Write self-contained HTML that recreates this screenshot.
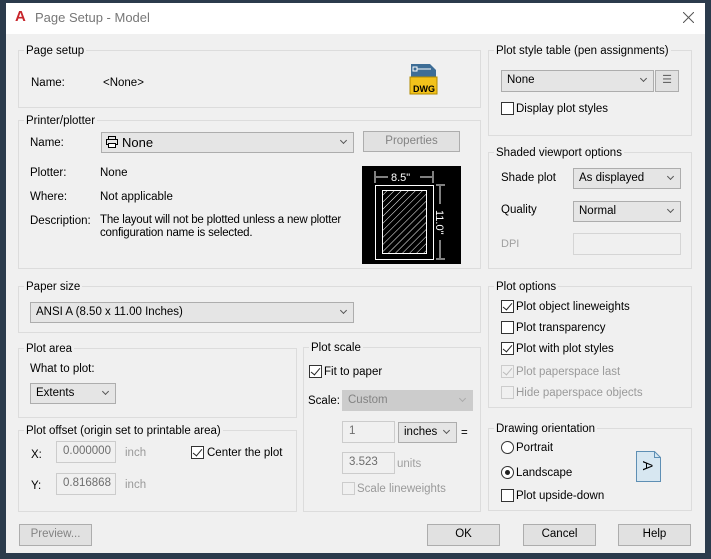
<!DOCTYPE html>
<html><head><meta charset="utf-8"><style>
*{box-sizing:border-box;margin:0;padding:0}
body{width:711px;height:559px;background:#2b3b4c;position:relative;overflow:hidden;font-family:"Liberation Sans",sans-serif;font-size:11.5px;color:#000}
.win{position:absolute;left:6px;top:3px;width:699px;height:550px;background:#f0f0f0}
.title{position:absolute;left:6px;top:3px;width:699px;height:31px;background:#fff}
.a{position:absolute}
.t{position:absolute;white-space:nowrap;line-height:14px}
.g{position:absolute;border:1px solid #dcdcdc}
.gl{position:absolute;background:#f0f0f0;padding:0 2px;line-height:14px;white-space:nowrap}
.sel{position:absolute;border:1px solid #adadad;background:#e5e5e5;padding-left:5px;line-height:18px}
.sel::after{content:"";position:absolute;right:7px;top:5px;width:4px;height:4px;border-right:1px solid #555;border-bottom:1px solid #555;transform:rotate(45deg)}
.dis{background:#ccc;color:#838383;border-color:#ccc}
.dis::after{border-color:#aaa}
.box{position:absolute;border:1px solid #ccc;background:#f0f0f0;color:#6d6d6d;padding-left:6px;line-height:18px}
.btn{position:absolute;border:1px solid #adadad;background:#e1e1e1;text-align:center;line-height:19px}
.cb{position:absolute;width:13px;height:13px;border:1px solid #333;background:#fff}
.cb.on::after{content:"";position:absolute;left:3px;top:0px;width:4px;height:8px;border-right:1.5px solid #222;border-bottom:1.5px solid #222;transform:rotate(40deg)}
.cb.d{border-color:#ccc;background:#f0f0f0}
.cb.d.on::after{border-color:#bbb}
.gray{color:#9a9a9a}
.rb{position:absolute;width:13px;height:13px;border:1px solid #333;border-radius:50%;background:#fff}
</style></head><body>
<div class="win"></div>
<div class="title"></div>
<div class="t" style="left:15px;top:10px;color:#c8262c;font-weight:bold;font-size:15px">A</div>
<div class="t" style="left:35px;top:11px;font-size:13px;color:#777">Page Setup - Model</div>
<svg class="a" style="left:683px;top:12px" width="11" height="11"><path d="M0 0L11 11M11 0L0 11" stroke="#555" stroke-width="1"/></svg>

<!-- Page setup -->
<div class="g" style="left:18px;top:50px;width:463px;height:58px"></div>
<div class="gl" style="left:24px;top:44px">Page setup</div>
<div class="t" style="left:31px;top:76px">Name:</div>
<div class="t" style="left:103px;top:76px">&lt;None&gt;</div>
<svg class="a" style="left:409px;top:63px" width="29" height="33"><path d="M2 1h19l6 6v16H2z" fill="#3d6d96"/><rect x="1" y="14" width="27" height="17" fill="#f2c21b" stroke="#b18a00"/><text x="4" y="29" font-size="9" font-weight="bold" font-family="Liberation Sans">DWG</text><rect x="4" y="4" width="4" height="4" fill="none" stroke="#fff"/><path d="M8 6h14" stroke="#fff"/></svg>

<!-- Printer -->
<div class="g" style="left:18px;top:120px;width:463px;height:149px"></div>
<div class="gl" style="left:24px;top:114px">Printer/plotter</div>
<div class="t" style="left:30px;top:136px">Name:</div>
<div class="sel" style="left:101px;top:132px;width:253px;height:21px;font-size:13px;line-height:19px;padding-left:20px">None</div>
<svg class="a" style="left:106px;top:136px" width="12" height="12"><rect x="2.5" y=".5" width="7" height="3" fill="none" stroke="#000"/><rect x=".5" y="3.5" width="11" height="5" fill="none" stroke="#000"/><rect x="2.5" y="7.5" width="7" height="4" fill="#fff" stroke="#000"/></svg>
<div class="btn dis" style="left:363px;top:131px;width:97px;height:21px">Properties</div>
<div class="t" style="left:30px;top:166px">Plotter:</div><div class="t" style="left:100px;top:166px">None</div>
<div class="t" style="left:30px;top:190px">Where:</div><div class="t" style="left:100px;top:190px">Not applicable</div>
<div class="t" style="left:30px;top:214px">Description:</div>
<div class="t" style="left:100px;top:214px;line-height:13px;letter-spacing:-0.2px">The layout will not be plotted unless a new plotter<br>configuration name is selected.</div>
<svg class="a" style="left:362px;top:166px" width="99" height="98"><rect width="99" height="98" fill="#000"/>
<defs><pattern id="h" width="5" height="5" patternUnits="userSpaceOnUse" patternTransform="rotate(45)"><line x1="0" y1="0" x2="0" y2="5" stroke="#fff" stroke-width="1"/></pattern></defs>
<rect x="13.5" y="19.5" width="58" height="74" fill="none" stroke="#fff"/><rect x="20.5" y="24.5" width="44" height="63" fill="url(#h)" stroke="#fff"/>
<path d="M13 5v12M71 5v12M14 11h12M58 11h12M74 19h9M74 93h9M78 20v18M78 74v18" stroke="#fff"/>
<text x="29" y="15" fill="#fff" font-size="11" font-family="Liberation Sans">8.5"</text>
<text x="0" y="0" fill="#fff" font-size="11" font-family="Liberation Sans" transform="translate(74,44) rotate(90)">11.0"</text></svg>

<!-- Paper size -->
<div class="g" style="left:18px;top:286px;width:463px;height:47px"></div>
<div class="gl" style="left:24px;top:280px">Paper size</div>
<div class="sel" style="left:30px;top:302px;width:324px;height:21px">ANSI A (8.50 x 11.00 Inches)</div>

<!-- Plot area -->
<div class="g" style="left:18px;top:348px;width:279px;height:70px"></div>
<div class="gl" style="left:24px;top:342px">Plot area</div>
<div class="t" style="left:30px;top:362px">What to plot:</div>
<div class="sel" style="left:30px;top:383px;width:86px;height:21px">Extents</div>

<!-- Plot offset -->
<div class="g" style="left:18px;top:430px;width:279px;height:82px"></div>
<div class="gl" style="left:24px;top:424px">Plot offset (origin set to printable area)</div>
<div class="t" style="left:31px;top:448px">X:</div>
<div class="box" style="left:56px;top:441px;width:60px;height:22px">0.000000</div>
<div class="t gray" style="left:125px;top:446px">inch</div>
<div class="t" style="left:31px;top:479px">Y:</div>
<div class="box" style="left:56px;top:473px;width:60px;height:22px">0.816868</div>
<div class="t gray" style="left:125px;top:478px">inch</div>
<div class="cb on" style="left:191px;top:446px"></div>
<div class="t" style="left:207px;top:446px">Center the plot</div>

<!-- Plot scale -->
<div class="g" style="left:303px;top:347px;width:178px;height:165px"></div>
<div class="gl" style="left:309px;top:341px">Plot scale</div>
<div class="cb on" style="left:309px;top:365px"></div>
<div class="t" style="left:324px;top:365px">Fit to paper</div>
<div class="t" style="left:308px;top:394px">Scale:</div>
<div class="sel dis" style="left:342px;top:390px;width:131px;height:21px">Custom</div>
<div class="box" style="left:342px;top:421px;width:53px;height:22px">1</div>
<div class="sel" style="left:398px;top:422px;width:59px;height:21px">inches</div>
<div class="t" style="left:461px;top:426px">=</div>
<div class="box" style="left:342px;top:452px;width:53px;height:22px">3.523</div>
<div class="t gray" style="left:397px;top:457px;color:#a0a0a0">units</div>
<div class="cb d" style="left:342px;top:482px"></div>
<div class="t gray" style="left:357px;top:482px">Scale lineweights</div>

<!-- Plot style table -->
<div class="g" style="left:488px;top:50px;width:204px;height:86px"></div>
<div class="gl" style="left:494px;top:44px">Plot style table (pen assignments)</div>
<div class="sel" style="left:501px;top:70px;width:153px;height:22px">None</div>
<div class="btn dis" style="left:655px;top:70px;width:24px;height:22px;color:#666;font-size:11px">☰</div>
<div class="cb" style="left:501px;top:102px"></div>
<div class="t" style="left:516px;top:102px">Display plot styles</div>

<!-- Shaded -->
<div class="g" style="left:488px;top:152px;width:204px;height:117px"></div>
<div class="gl" style="left:494px;top:146px">Shaded viewport options</div>
<div class="t" style="left:501px;top:171px">Shade plot</div>
<div class="sel" style="left:573px;top:168px;width:108px;height:21px">As displayed</div>
<div class="t" style="left:501px;top:203px">Quality</div>
<div class="sel" style="left:573px;top:201px;width:108px;height:21px">Normal</div>
<div class="t gray" style="left:501px;top:237px;color:#a0a0a0;font-size:11px">DPI</div>
<div class="box" style="left:573px;top:233px;width:108px;height:22px;border-color:#d5d5d5"></div>

<!-- Plot options -->
<div class="g" style="left:488px;top:286px;width:204px;height:122px"></div>
<div class="gl" style="left:494px;top:280px">Plot options</div>
<div class="cb on" style="left:501px;top:300px"></div><div class="t" style="left:516px;top:300px">Plot object lineweights</div>
<div class="cb" style="left:501px;top:321px"></div><div class="t" style="left:516px;top:321px">Plot transparency</div>
<div class="cb on" style="left:501px;top:342px"></div><div class="t" style="left:516px;top:342px">Plot with plot styles</div>
<div class="cb d on" style="left:501px;top:365px"></div><div class="t gray" style="left:516px;top:365px">Plot paperspace last</div>
<div class="cb d" style="left:501px;top:386px"></div><div class="t gray" style="left:516px;top:386px">Hide paperspace objects</div>

<!-- Orientation -->
<div class="g" style="left:488px;top:428px;width:204px;height:83px"></div>
<div class="gl" style="left:494px;top:422px">Drawing orientation</div>
<div class="rb" style="left:501px;top:441px"></div><div class="t" style="left:516px;top:441px">Portrait</div>
<div class="rb" style="left:501px;top:466px"></div><div class="a" style="left:505px;top:470px;width:5px;height:5px;border-radius:50%;background:#222"></div>
<div class="t" style="left:516px;top:466px">Landscape</div>
<div class="cb" style="left:501px;top:489px"></div><div class="t" style="left:516px;top:489px">Plot upside-down</div>
<svg class="a" style="left:636px;top:451px" width="26" height="32"><path d="M.5 .5h18l6 6v24H.5z" fill="#d7e7f1" stroke="#5e8fb4"/><path d="M18.5 .5v6h6" fill="none" stroke="#5e8fb4"/><text x="0" y="0" font-size="14" font-family="Liberation Sans" transform="translate(7,10) rotate(90)">A</text></svg>

<!-- buttons -->
<div class="btn dis" style="left:19px;top:524px;width:73px;height:22px">Preview...</div>
<div class="btn" style="left:427px;top:524px;width:73px;height:22px">OK</div>
<div class="btn" style="left:523px;top:524px;width:73px;height:22px">Cancel</div>
<div class="btn" style="left:618px;top:524px;width:73px;height:22px">Help</div>
</body></html>
